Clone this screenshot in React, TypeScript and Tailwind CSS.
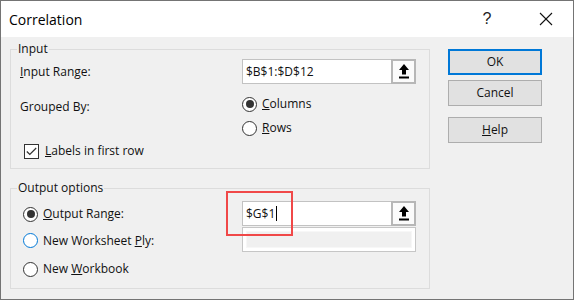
import React from "react";

const Radio = ({ checked = false, blue = false }: { checked?: boolean; blue?: boolean }) => (
  <span
    className={
      blue
        ? "w-[15px] h-[15px] rounded-full border border-[#0078d7] bg-white flex items-center justify-center shrink-0"
        : "w-[15px] h-[15px] rounded-full border border-[#333333] bg-white flex items-center justify-center shrink-0"
    }
  >
    {checked && <span className="w-[8px] h-[8px] rounded-full bg-[#333333]" />}
  </span>
);

const UpArrow = () => (
  <svg width="10" height="15" viewBox="0 0 10 15">
    <polygon points="5,0 10,6 7,6 7,10.5 3,10.5 3,6 0,6" fill="#000" />
    <rect x="0" y="12.5" width="10" height="2" fill="#000" />
  </svg>
);

const RefButton = () => (
  <div className="w-[25px] h-[25px] -mt-[1px] -mb-[1px] -mr-[1px] border-2 border-[#b7b7b7] bg-[#fbfbfb] flex items-center justify-center shrink-0">
    <UpArrow />
  </div>
);

export default function App() {
  return (
    <div className="relative w-[574px] h-[300px] border border-[#747474] bg-[#f0f0f0] flex flex-col font-['Open_Sans',sans-serif] text-[12px] text-[#111]">
      {/* Title bar */}
      <div className="h-[36px] bg-white flex items-center shrink-0">
        <div className="pl-[8px] text-[14px] text-[#000] flex-1">Correlation</div>
        <div className="w-[40px] text-center text-[16px] text-[#222] mr-[16px] font-['Liberation_Sans',sans-serif]">?</div>
        <div className="w-[46px] flex justify-center mr-[4px]">
          <svg width="14" height="14" viewBox="0 0 14 14">
            <line x1="1" y1="1" x2="13" y2="13" stroke="#111" strokeWidth="1.1" />
            <line x1="13" y1="1" x2="1" y2="13" stroke="#111" strokeWidth="1.1" />
          </svg>
        </div>
      </div>

      {/* Body */}
      <div className="flex pl-[9px] pt-[12px]">
        <div className="w-[420px] flex flex-col">
          {/* Input group */}
          <div className="relative h-[120px] border border-[#dcdcdc] pt-[9px] pl-[9px]">
            <span className="absolute top-[-10px] left-[6px] px-[1px] bg-[#f0f0f0] leading-[18px]">Input</span>
            <div className="flex items-center h-[25px]">
              <div className="w-[222px]">
                <span className="underline">I</span>nput Range:
              </div>
              <div className="w-[174px] h-[25px] border border-[#c2c2c2] bg-white flex items-center">
                <span className="flex-1 pl-[3px]">$B$1:$D$12</span>
                <RefButton />
              </div>
            </div>
            <div className="flex mt-[8px]">
              <div className="w-[222px] h-[24px] mt-[3px] flex items-center">Grouped By:</div>
              <div className="flex flex-col">
                <div className="h-[24px] flex items-center gap-[5px]">
                  <Radio checked />
                  <span>
                    <span className="underline">C</span>olumns
                  </span>
                </div>
                <div className="h-[24px] flex items-center gap-[5px]">
                  <Radio />
                  <span>
                    <span className="underline">R</span>ows
                  </span>
                </div>
              </div>
            </div>
            <div className="h-[20px] mt-[1px] ml-[4px] flex items-center gap-[6px]">
              <span className="w-[15px] h-[15px] border border-[#333333] bg-white flex items-center justify-center shrink-0">
                <svg width="11" height="9" viewBox="0 0 11 9">
                  <polyline points="0.8,4.5 3.8,7.5 10.2,1" fill="none" stroke="#333" strokeWidth="1.2" />
                </svg>
              </span>
              <span>
                <span className="underline">L</span>abels in first row
              </span>
            </div>
          </div>

          {/* Output group */}
          <div className="relative h-[101px] mt-[19px] border border-[#dcdcdc] pt-[12px] pl-[12px]">
            <span className="absolute top-[-10px] left-[6px] px-[1px] bg-[#f0f0f0] leading-[18px]">Output options</span>
            <div className="flex items-center h-[25px]">
              <div className="w-[219px] flex items-center gap-[5px] pt-[1px]">
                <Radio checked />
                <span>
                  <span className="underline">O</span>utput Range:
                </span>
              </div>
              <div className="w-[174px] h-[25px] border border-[#c2c2c2] bg-white flex items-center">
                <span className="pl-[3px]">$G$1</span>
                <span className="w-[1px] h-[15px] bg-[#000] ml-[1px]" />
                <span className="flex-1" />
                <RefButton />
              </div>
            </div>
            <div className="flex items-center h-[25px] mt-[1px]">
              <div className="w-[219px] flex items-center gap-[5px] pt-[2px]">
                <Radio blue />
                <span>
                  New Worksheet <span className="underline">P</span>ly:
                </span>
              </div>
              <div className="w-[174px] h-[25px] border border-[#c6c6c6] bg-white p-[3px]">
                <div className="w-full h-full bg-[#f0f0f0] border border-[#f7f7f7]" />
              </div>
            </div>
            <div className="flex items-center h-[24px] mt-[5px] gap-[5px]">
              <Radio />
              <span>
                New <span className="underline">W</span>orkbook
              </span>
            </div>
          </div>
        </div>

        {/* Buttons */}
        <div className="ml-[18px] flex flex-col">
          <div className="w-[94px] h-[26px] border-2 border-[#0078d7] bg-[#e1e1e1] flex items-center justify-center">
            OK
          </div>
          <div className="w-[94px] h-[26px] mt-[5px] border border-[#adadad] bg-[#e1e1e1] flex items-center justify-center">
            Cancel
          </div>
          <div className="w-[94px] h-[26px] mt-[11px] border border-[#adadad] bg-[#e1e1e1] flex items-center justify-center">
            <span>
              <span className="underline">H</span>elp
            </span>
          </div>
        </div>
      </div>

      {/* Red annotation box */}
      <div className="absolute left-[225px] top-[190px] w-[67px] h-[45px] border-2 border-[#f04848]" />
    </div>
  );
}
